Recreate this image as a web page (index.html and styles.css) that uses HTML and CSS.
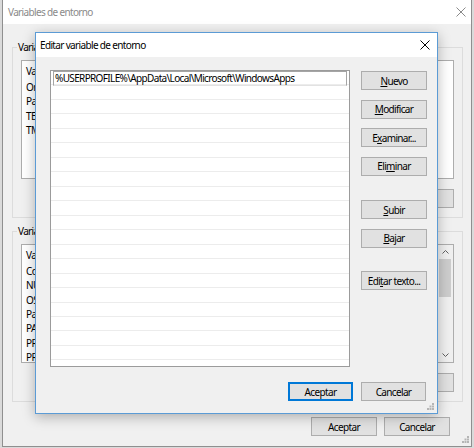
FILE: index.html
```html
<!DOCTYPE html>
<html lang="es">
<head>
<meta charset="utf-8">
<title>Variables de entorno</title>
<link rel="stylesheet" href="styles.css">
</head>
<body>
<div class="desk">
  <div class="win">
    <div class="win-title">
      <span>Variables de entorno</span>
      <svg class="x-icon" width="10" height="10" viewBox="0 0 10 10"><path d="M0.5 0.5L9.5 9.5M9.5 0.5L0.5 9.5" stroke="#8a8a8a" stroke-width="1" fill="none"/></svg>
    </div>
    <div class="win-body">
      <fieldset class="group">
        <legend>Variables de usuario para Usuario</legend>
        <div class="lv">
          <div class="lv-cols">
            <div class="lv-head"><span class="c1">Variable</span><span class="c2">Valor</span></div>
            <div class="lv-row"><span class="c1">OneDrive</span><span class="c2">C:\Users\Usuario\OneDrive</span></div>
            <div class="lv-row"><span class="c1">Path</span><span class="c2">%USERPROFILE%\AppData\Local\Microsoft\WindowsApps;</span></div>
            <div class="lv-row"><span class="c1">TEMP</span><span class="c2">%USERPROFILE%\AppData\Local\Temp</span></div>
            <div class="lv-row"><span class="c1">TMP</span><span class="c2">%USERPROFILE%\AppData\Local\Temp</span></div>
          </div>
        </div>
        <div class="group-btns">
          <button class="btn btn-wide">Nuevo...</button>
          <button class="btn btn-wide">Editar...</button>
          <button class="btn btn-wide">Eliminar</button>
        </div>
      </fieldset>
      <fieldset class="group">
        <legend>Variables del sistema</legend>
        <div class="lv">
          <div class="lv-cols">
            <div class="lv-head"><span class="c1">Variable</span><span class="c2">Valor</span></div>
            <div class="lv-row"><span class="c1">ComSpec</span><span class="c2">C:\Windows\system32\cmd.exe</span></div>
            <div class="lv-row"><span class="c1">NUMBER_OF_PROCESSORS</span><span class="c2">4</span></div>
            <div class="lv-row"><span class="c1">OS</span><span class="c2">Windows_NT</span></div>
            <div class="lv-row"><span class="c1">Path</span><span class="c2">C:\Windows\system32;C:\Windows</span></div>
            <div class="lv-row"><span class="c1">PATHEXT</span><span class="c2">.COM;.EXE;.BAT;.CMD</span></div>
            <div class="lv-row"><span class="c1">PROCESSOR_ARCHITECTURE</span><span class="c2">AMD64</span></div>
            <div class="lv-row"><span class="c1">PROCESSOR_IDENTIFIER</span><span class="c2">Intel64 Family 6</span></div>
          </div>
          <div class="sb">
            <div class="sb-arrow">
              <svg width="7" height="4" viewBox="0 0 7 4"><path d="M0.5 3.5L3.5 0.5L6.5 3.5" stroke="#606060" fill="none"/></svg>
            </div>
            <div class="sb-track"><div class="sb-thumb"></div></div>
            <div class="sb-arrow">
              <svg width="7" height="4" viewBox="0 0 7 4"><path d="M0.5 0.5L3.5 3.5L6.5 0.5" stroke="#606060" fill="none"/></svg>
            </div>
          </div>
        </div>
        <div class="group-btns">
          <button class="btn btn-wide">Nueva...</button>
          <button class="btn btn-wide">Editar...</button>
          <button class="btn btn-wide">Eliminar</button>
        </div>
      </fieldset>
      <div class="foot foot-win">
        <button class="btn">Aceptar</button>
        <button class="btn">Cancelar</button>
      </div>
    </div>
    <svg class="grip grip-win" width="7" height="7" viewBox="0 0 7 7"><g fill="#b5b5b5"><rect x="5" y="0" width="2" height="2"/><rect x="5" y="5" width="2" height="2"/><rect x="0" y="5" width="2" height="2"/><rect x="5" y="2.5" width="2" height="2"/><rect x="2.5" y="5" width="2" height="2"/><rect x="2.5" y="2.5" width="2" height="2"/></g></svg>
  </div>

  <div class="dlg">
    <div class="dlg-title">
      <span>Editar variable de entorno</span>
      <svg class="x-icon" width="10" height="10" viewBox="0 0 10 10"><path d="M0.5 0.5L9.5 9.5M9.5 0.5L0.5 9.5" stroke="#000" stroke-width="1" fill="none"/></svg>
    </div>
    <div class="dlg-body">
      <div class="dlg-main">
        <div class="plist">
          <div class="prow prow-edit"><span class="edit-box">%USERPROFILE%\AppData\Local\Microsoft\WindowsApps</span></div>
          <div class="prow"></div><div class="prow"></div><div class="prow"></div><div class="prow"></div>
          <div class="prow"></div><div class="prow"></div><div class="prow"></div><div class="prow"></div>
          <div class="prow"></div><div class="prow"></div><div class="prow"></div><div class="prow"></div>
          <div class="prow"></div><div class="prow"></div><div class="prow"></div><div class="prow"></div>
          <div class="prow"></div><div class="prow"></div><div class="prow"></div><div class="prow"></div>
        </div>
        <div class="side">
          <button class="btn"><u>N</u>uevo</button>
          <button class="btn"><u>M</u>odificar</button>
          <button class="btn">E<u>x</u>aminar...</button>
          <button class="btn">Eli<u>m</u>inar</button>
          <button class="btn gap-a"><u>S</u>ubir</button>
          <button class="btn"><u>B</u>ajar</button>
          <button class="btn gap-b">Edi<u>t</u>ar texto...</button>
        </div>
      </div>
      <div class="foot foot-dlg">
        <button class="btn btn-default">Aceptar</button>
        <button class="btn">Cancelar</button>
      </div>
    </div>
    <svg class="grip grip-dlg" width="7" height="7" viewBox="0 0 7 7"><g fill="#b5b5b5"><rect x="5" y="0" width="2" height="2"/><rect x="5" y="5" width="2" height="2"/><rect x="0" y="5" width="2" height="2"/><rect x="5" y="2.5" width="2" height="2"/><rect x="2.5" y="5" width="2" height="2"/><rect x="2.5" y="2.5" width="2" height="2"/></g></svg>
  </div>
</div>
</body>
</html>
```

FILE: styles.css
```css
* { box-sizing: border-box; }
html, body { margin: 0; padding: 0; }
body {
  width: 474px;
  height: 448px;
  overflow: hidden;
  background: #dadada;
  font-family: "Noto Sans", "Open Sans", sans-serif;
  font-size: 10px;
  letter-spacing: -0.65px;
  color: #000;
}
.desk { position: relative; width: 474px; height: 448px; }

/* back window */
.win {
  position: relative;
  margin-left: 2px;
  width: 470px;
  height: 447px;
  background: #f0f0f0;
  border: 1px solid #8f8f8f;
  border-top: none;
  display: flex;
  flex-direction: column;
}
.win-title {
  flex: none;
  height: 24px;
  background: #fff;
  display: flex;
  align-items: center;
  justify-content: space-between;
  padding: 0 5px;
  color: #8a8a8a;
}
.win-body {
  flex: 1;
  padding: 15px 8px 0 9px;
  display: flex;
  flex-direction: column;
}
.group {
  margin: 0 0 5px 0;
  padding: 5px 8px 9px 8px;
  border: 1px solid #dcdcdc;
  min-width: 0;
}
.group legend {
  padding: 0 1px;
  margin-left: -4px;
  line-height: 16px;
  height: 16px;
  white-space: nowrap;
}
.lv {
  height: 119px;
  border: 1px solid #adadad;
  background: #fff;
  display: flex;
  overflow: hidden;
}
.lv-cols { flex: 1; min-width: 0; }
.lv-head {
  height: 19px;
  display: flex;
  align-items: center;
}
.lv-head .c1 { border-right: 1px solid #e5e5e5; }
.lv-row {
  height: 14.3px;
  display: flex;
  align-items: center;
  white-space: nowrap;
}
.c1 { width: 150px; flex: none; padding-left: 4px; line-height: 14px; }
.c2 { flex: 1; padding-left: 6px; line-height: 14px; }

.sb {
  flex: none;
  width: 16px;
  background: #f0f0f0;
  display: flex;
  flex-direction: column;
}
.sb-arrow {
  flex: none;
  height: 14px;
  display: flex;
  align-items: center;
  justify-content: center;
}
.sb-track { flex: 1; padding: 0 2px; }
.sb-thumb { height: 38px; background: #cdcdcd; }

.group-btns {
  margin-top: 10px;
  display: flex;
  justify-content: flex-end;
  gap: 7px;
}
.btn {
  height: 19px;
  width: 66px;
  padding: 0;
  border: 1px solid #adadad;
  background: #e1e1e1;
  font: inherit;
  letter-spacing: inherit;
  line-height: 16px;
  color: #000;
  text-align: center;
  white-space: nowrap;
}
.btn-wide { width: 75px; }
.btn-default {
  border-color: #0078d7;
  box-shadow: inset 0 0 0 1px #0078d7;
}
.foot { display: flex; justify-content: flex-end; }
.foot-win { margin-top: 10px; padding-right: 13px; gap: 7px; }

.grip { position: absolute; }
.grip-win { right: 2px; bottom: 3px; }
.grip-dlg { right: 3px; bottom: 3px; }

/* front dialog */
.dlg {
  position: absolute;
  left: 35px;
  top: 32px;
  width: 403px;
  height: 382px;
  border: 1px solid #5b9bd5;
  background: #f0f0f0;
  box-shadow: 0 3px 12px rgba(0, 0, 0, 0.28);
  display: flex;
  flex-direction: column;
}
.dlg-title {
  flex: none;
  height: 24px;
  background: #fff;
  display: flex;
  align-items: center;
  justify-content: space-between;
  padding: 0 7px 0 4px;
}
.dlg-body {
  flex: 1;
  padding: 13px 10px 12px 14px;
  display: flex;
  flex-direction: column;
}
.dlg-main { display: flex; }
.plist {
  width: 300px;
  height: 297px;
  border: 1px solid #9b9b9b;
  background: #fff;
  padding-top: 1px;
  overflow: hidden;
}
.prow {
  height: 14.47px;
  border-bottom: 1px solid #ececec;
}
.edit-box {
  display: block;
  margin: -1px 2px 0 2px;
  height: 15px;
  border: 1px solid #a5a5a5;
  border-bottom-color: #e2e2e2;
  padding-left: 1px;
  line-height: 13px;
  white-space: nowrap;
  overflow: hidden;
}
.side {
  margin-left: 11px;
  padding-top: 1px;
  display: flex;
  flex-direction: column;
  gap: 9.5px;
}
.side .gap-a { margin-top: 15px; }
.side .gap-b { margin-top: 14px; }
.foot-dlg { margin-top: 15px; gap: 8px; padding-right: 1px; }
.foot-dlg .btn { width: 65px; }
```
